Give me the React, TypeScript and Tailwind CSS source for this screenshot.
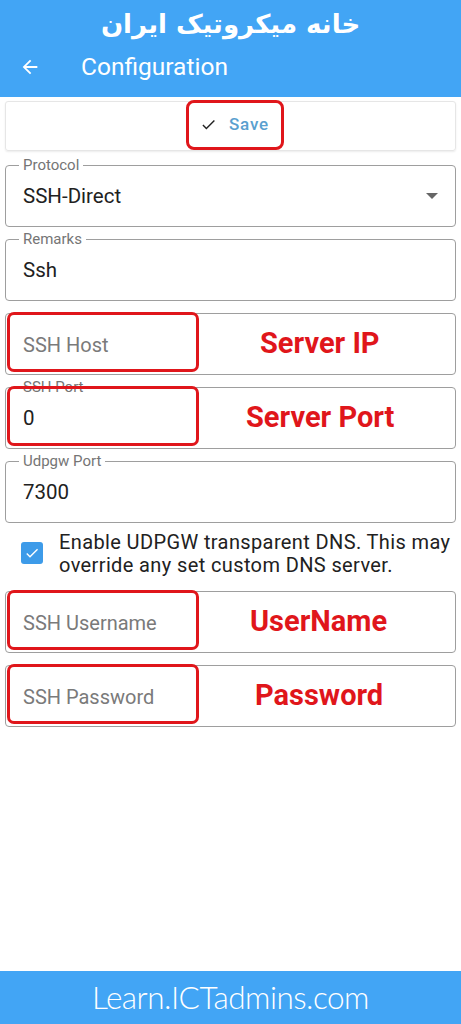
import React from "react";

function Field({
  label,
  value,
  placeholder,
  dropdown,
  note,
  noteX,
  className,
}: {
  label?: string;
  value?: string;
  placeholder?: string;
  dropdown?: boolean;
  note?: string;
  noteX?: string;
  className?: string;
}) {
  return (
    <div className={"relative h-[62px] rounded-[4px] border border-[#9e9e9e] flex items-center pl-[17px] pr-[20px] " + (className ?? "")}>
      {label && (
        <span className="absolute left-[13px] top-[-10px] bg-white px-[4px] text-[15px] leading-[18px] text-[#757575]">
          {label}
        </span>
      )}
      {value ? (
        <span className="text-[20.5px] text-[#212121] mt-[1px]">{value}</span>
      ) : (
        <span className="text-[20px] text-[#7a7a7a] mt-[1px]">{placeholder}</span>
      )}
      {dropdown && (
        <svg className="ml-auto mr-[-3px]" width="12" height="6" viewBox="0 0 12 6">
          <path d="M0 0 L12 0 L6 6 Z" fill="#666" />
        </svg>
      )}
      {note && (
        <>
          <div className="absolute left-[1px] top-[-2px] w-[192px] h-[60px] rounded-[7px] border-[3px] border-[#e0161b]" />
          <span
            className={"absolute top-[12px] text-[29px] font-bold text-[#e0161b] leading-[34px] " + (noteX ?? "")}
          >
            {note}
          </span>
        </>
      )}
    </div>
  );
}

export default function App() {
  return (
    <div className="w-[461px] h-[1024px] bg-white flex flex-col" style={{ fontFamily: "Roboto, 'Noto Sans', sans-serif" }}>
      <div className="h-[97px] bg-[#42a5f5] flex flex-col">
        <div
          className="h-[47px] flex items-center justify-center text-white text-[26px] font-bold pt-[1px]"
          style={{ fontFamily: "'DejaVu Sans', sans-serif" }}
          dir="rtl"
        >
          خانه میکروتیک ایران
        </div>
        <div className="flex items-center h-[40px]">
          <svg className="ml-[19px]" width="22" height="22" viewBox="0 0 24 24">
            <path d="M20 11H7.83l5.59-5.59L12 4l-8 8 8 8 1.41-1.41L7.83 13H20v-2z" fill="white" />
          </svg>
          <span className="ml-[40px] text-white text-[24.5px]">Configuration</span>
        </div>
      </div>

      <div className="px-[5px] flex flex-col">
        <div className="mt-[4px] h-[50px] rounded-[3px] border border-[#e6e6e6] shadow-[0_1px_2px_rgba(0,0,0,0.08)] flex items-center justify-center">
          <div className="relative w-[98px] h-[50px] -mt-[3px] ml-[8px] rounded-[8px] border-[3px] border-[#e0161b] flex items-center justify-center gap-[12px]">
            <svg width="17" height="17" viewBox="0 0 24 24">
              <path d="M9 16.17L4.83 12l-1.42 1.41L9 19 21 7l-1.41-1.41z" fill="#222" />
            </svg>
            <span className="text-[17px] font-medium text-[#5aa0cf] tracking-[0.8px]">Save</span>
          </div>
        </div>

        <Field className="mt-[14px]" label="Protocol" value="SSH-Direct" dropdown />
        <Field className="mt-[12px]" label="Remarks" value="Ssh" />
        <Field className="mt-[12px]" placeholder="SSH Host" note="Server IP" noteX="left-[254px]" />
        <Field className="mt-[12px]" label="SSH Port" value="0" note="Server Port" noteX="left-[240px]" />
        <Field className="mt-[12px]" label="Udpgw Port" value="7300" />

        <div className="mt-[8px] flex items-start">
          <div className="ml-[16px] mt-[11px] w-[22px] h-[22px] rounded-[3px] bg-[#3d9be9] flex items-center justify-center">
            <svg width="16" height="16" viewBox="0 0 24 24">
              <path d="M9 16.17L4.83 12l-1.42 1.41L9 19 21 7l-1.41-1.41z" fill="white" />
            </svg>
          </div>
          <div className="ml-[16px] text-[20px] leading-[23px] text-[#212121] whitespace-nowrap tracking-[0.38px]">
            Enable UDPGW transparent DNS. This may
            <br />
            override any set custom DNS server.
          </div>
        </div>

        <Field className="mt-[14px]" placeholder="SSH Username" note="UserName" noteX="left-[244px]" />
        <Field className="mt-[12px]" placeholder="SSH Password" note="Password" noteX="left-[249px]" />
      </div>

      <div className="flex-1" />
      <div className="h-[53px] bg-[#42a5f5] flex items-center justify-center">
        <span className="text-white text-[31.5px] font-light tracking-[-0.5px]" style={{ fontFamily: "Lato, 'Open Sans', sans-serif" }}>
          Learn.ICTadmins.com
        </span>
      </div>
    </div>
  );
}
